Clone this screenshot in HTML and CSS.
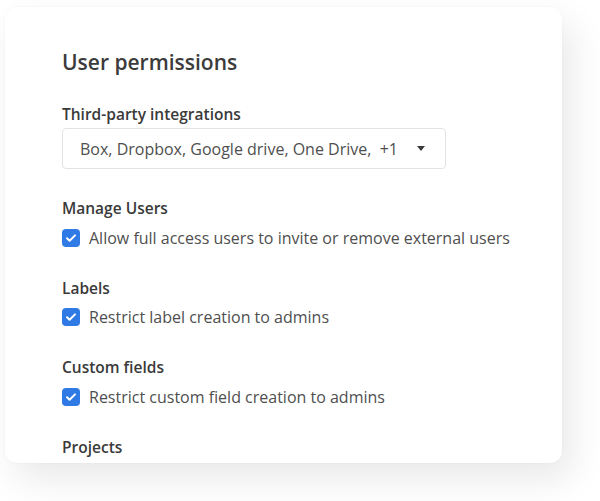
FILE: index.html
```html
<!DOCTYPE html>
<html>
<head>
<meta charset="utf-8">
<link rel="stylesheet" href="styles.css">
</head>
<body>
<div class="card">
  <h1 class="title">User permissions</h1>

  <section class="group group-first">
    <div class="label">Third-party integrations</div>
    <div class="select">
      <span class="select-text">Box, Dropbox, Google drive, One Drive, &nbsp;+1</span>
      <span class="caret"></span>
    </div>
  </section>

  <section class="group">
    <div class="label">Manage Users</div>
    <label class="check-row">
      <span class="checkbox"><svg viewBox="0 0 18 18" width="18" height="18"><path d="M5 9.3l2.6 2.5L13 6.4" fill="none" stroke="#fff" stroke-width="2" stroke-linecap="round" stroke-linejoin="round"/></svg></span>
      <span class="check-text">Allow full access users to invite or remove external users</span>
    </label>
  </section>

  <section class="group">
    <div class="label">Labels</div>
    <label class="check-row">
      <span class="checkbox"><svg viewBox="0 0 18 18" width="18" height="18"><path d="M5 9.3l2.6 2.5L13 6.4" fill="none" stroke="#fff" stroke-width="2" stroke-linecap="round" stroke-linejoin="round"/></svg></span>
      <span class="check-text">Restrict label creation to admins</span>
    </label>
  </section>

  <section class="group">
    <div class="label">Custom fields</div>
    <label class="check-row">
      <span class="checkbox"><svg viewBox="0 0 18 18" width="18" height="18"><path d="M5 9.3l2.6 2.5L13 6.4" fill="none" stroke="#fff" stroke-width="2" stroke-linecap="round" stroke-linejoin="round"/></svg></span>
      <span class="check-text">Restrict custom field creation to admins</span>
    </label>
  </section>

  <section class="group">
    <div class="label">Projects</div>
  </section>
</div>
</body>
</html>
```

FILE: styles.css
```css
html, body {
  margin: 0;
  padding: 0;
  background: #ffffff;
}

body {
  min-height: 501px;
  padding-top: 7px;
  box-sizing: border-box;
  font-family: "Open Sans", "Lato", sans-serif;
  color: #4a4a4a;
}

.card {
  box-sizing: border-box;
  margin: 0 0 0 5px;
  width: 557px;
  height: 456px;
  padding: 41px 0 0 57px;
  background: #ffffff;
  border-radius: 12px;
  box-shadow: 10px 16px 36px rgba(0, 0, 0, 0.09), 0 0 3px rgba(0, 0, 0, 0.04);
  overflow: hidden;
}

.title {
  margin: 0;
  font-size: 21px;
  line-height: 28px;
  font-weight: 600;
  color: #3b3b3b;
}

.group {
  margin-top: 28px;
}

.group-first {
  margin-top: 27px;
}

.label {
  font-size: 15.5px;
  line-height: 22px;
  font-weight: 600;
  color: #3a3a3a;
}

.select {
  box-sizing: border-box;
  margin-top: 3px;
  width: 384px;
  height: 41px;
  border: 1px solid #e3e3e3;
  border-radius: 4px;
  display: flex;
  align-items: center;
  padding: 0 20px 0 17px;
}

.select-text {
  flex: 1;
  font-size: 16px;
  color: #4f4f4f;
  white-space: nowrap;
}

.caret {
  width: 0;
  height: 0;
  border-left: 4.5px solid transparent;
  border-right: 4.5px solid transparent;
  border-top: 5px solid #3a3a3a;
}

.check-row {
  display: flex;
  align-items: center;
  gap: 9px;
  margin-top: 7.5px;
}

.checkbox {
  width: 18px;
  height: 18px;
  border-radius: 4px;
  background: #2f7ae5;
  display: flex;
  flex-shrink: 0;
}

.check-text {
  font-size: 16px;
  line-height: 22px;
  color: #4f4f4f;
}
```
